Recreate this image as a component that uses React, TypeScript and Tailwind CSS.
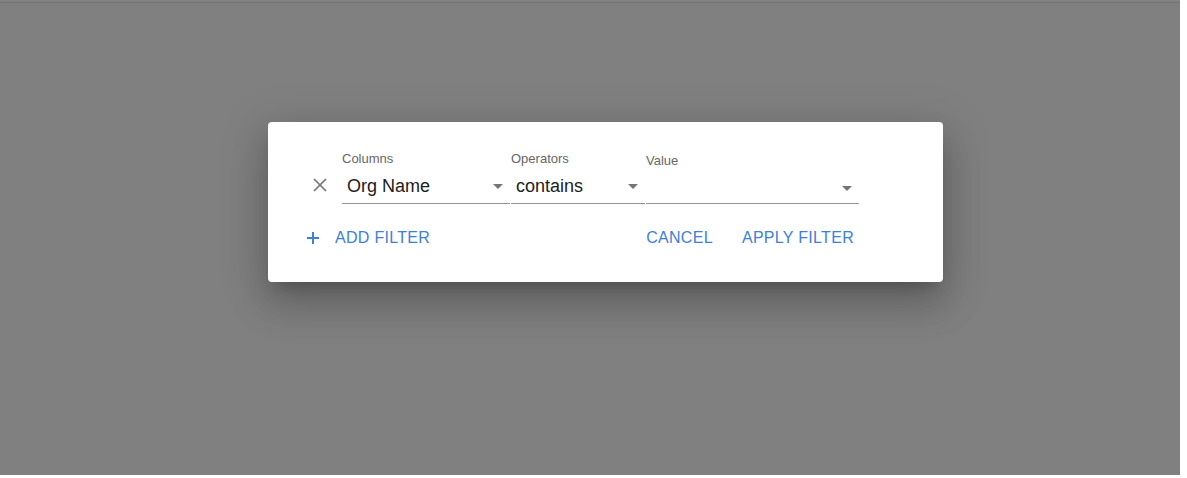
import React from 'react';

const ArrowDrop: React.FC = () => (
  <svg viewBox="0 0 24 24" className="absolute right-0 top-0 h-6 w-6" fill="#757575">
    <path d="M7 10l5 5 5-5z" />
  </svg>
);

interface SelectFieldProps {
  label: string;
  value?: string;
  width: string;
  shifted?: boolean;
}

const SelectField: React.FC<SelectFieldProps> = ({ label, value, width, shifted }) => (
  <div className={`flex flex-col ${width}`}>
    <label
      className={`block text-[13px] leading-[16px] text-[#666666] ${shifted ? 'mt-[2px]' : ''}`}
    >
      {label}
    </label>
    <div
      className={`relative mt-[7px] box-border border-b border-[#949494] ${
        shifted ? 'h-[28px]' : 'h-[30px]'
      }`}
    >
      <span className="block pl-[5px] text-[18px] leading-[24px] text-[#212121]">
        {value}
      </span>
      <ArrowDrop />
    </div>
  </div>
);

const App: React.FC = () => {
  return (
    <div
      className="w-[1187px] h-[478px] bg-white overflow-hidden"
      style={{ fontFamily: '"Liberation Sans", Arial, sans-serif' }}
    >
      <div className="w-[1180px] h-[475px] bg-[#808080] flex flex-col">
        <div className="h-[2px] bg-[#828282]" />
        <div className="h-[1px] bg-[#747474]" />

        <div className="pl-[268px] pt-[119px]">
          <div className="w-[675px] h-[160px] rounded-[4px] bg-white shadow-[0px_11px_15px_-7px_rgba(0,0,0,0.2),0px_24px_38px_3px_rgba(0,0,0,0.14),0px_9px_46px_8px_rgba(0,0,0,0.12)] pt-[29px]">
            {/* filter row */}
            <div className="flex items-start pl-[40px]">
              <button
                type="button"
                className="mt-[22px] flex h-6 w-6 items-center justify-center"
              >
                <svg viewBox="0 0 14 14" className="h-[14px] w-[14px]" stroke="#757575" strokeWidth="1.7" fill="none">
                  <path d="M1 1l12 12M13 1L1 13" />
                </svg>
              </button>
              <div className="ml-[10px] flex gap-[1px]">
                <SelectField label="Columns" value="Org Name" width="w-[168px]" />
                <SelectField label="Operators" value="contains" width="w-[134px]" />
                <SelectField label="Value" width="w-[213px]" shifted />
              </div>
            </div>

            {/* footer */}
            <div className="mt-[22px] flex items-center pl-[38px] pr-[89px] text-[16px] leading-[24px] tracking-[0.3px] text-[#3d80db]">
              <button type="button" className="flex items-center uppercase">
                <svg viewBox="0 0 14 14" className="h-[14px] w-[14px]" stroke="#3d80db" strokeWidth="2" fill="none">
                  <path d="M7 1v12M1 7h12" />
                </svg>
                <span className="ml-[15px] uppercase">Add Filter</span>
              </button>
              <div className="ml-auto flex items-center gap-[29px]">
                <button type="button" className="uppercase">Cancel</button>
                <button type="button" className="uppercase">Apply Filter</button>
              </div>
            </div>
          </div>
        </div>
      </div>
    </div>
  );
};

export default App;
